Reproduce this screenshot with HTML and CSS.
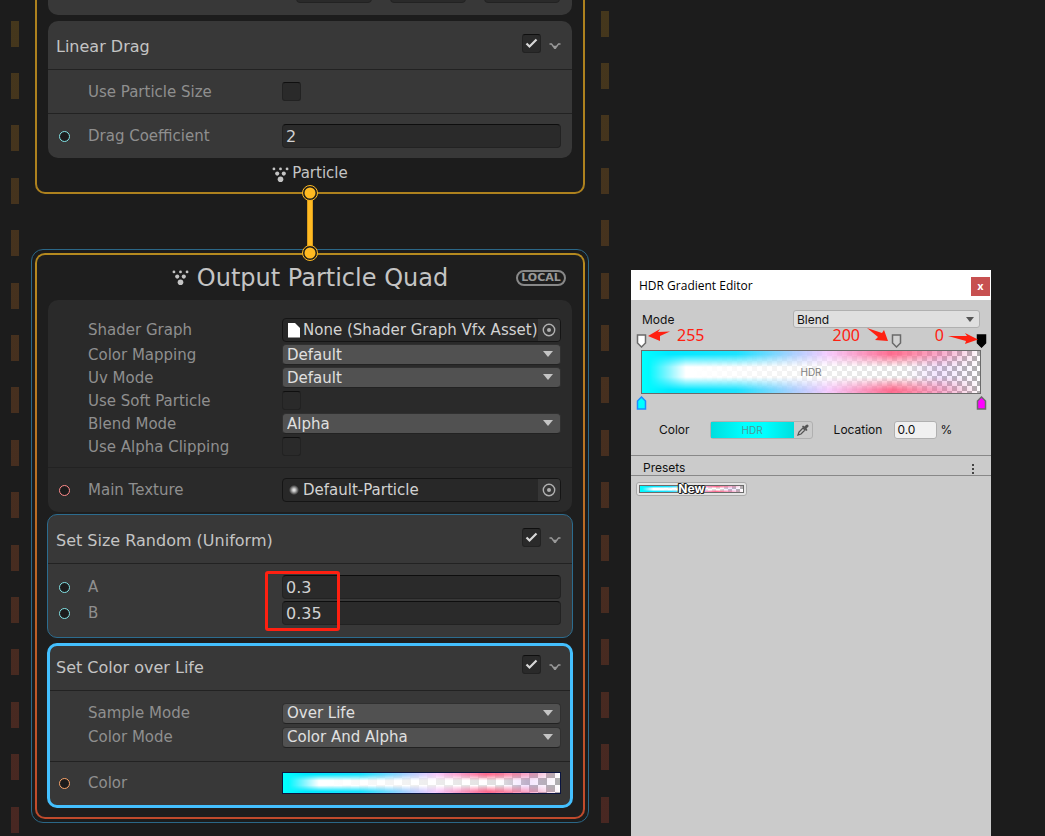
FILE: index.html
```html
<!DOCTYPE html>
<html lang="en">
	<head>
		<meta charset="utf-8" />
		<meta name="viewport" content="width=device-width" />
		<title>Visual Effect Graph</title>
		<link rel="stylesheet" href="styles.css">
	</head>
	<body>
		<svg class="defs" aria-hidden="true">
			<defs>
				<linearGradient id="system-edge" gradientUnits="userSpaceOnUse" x1="0" y1="0" x2="0" y2="836">
					<stop offset="0" stop-color="#44371c" />
					<stop offset="1" stop-color="#482722" />
				</linearGradient>
				<symbol id="particles" viewBox="0 0 18 16">
					<g fill="currentColor">
						<circle cx="2" cy="2" r="1.5" /><circle cx="9" cy="2" r="1.5" /><circle cx="16" cy="2" r="1.5" />
						<circle cx="5.500" cy="7" r="2.200" /><circle cx="12.500" cy="7" r="2.200" />
						<circle cx="9" cy="13" r="3" />
					</g>
				</symbol>
				<symbol id="chevron" viewBox="0 0 12 8">
					<path d="M0.500 2h2l2 2.500h3L9.500 2h2" fill="none" stroke="currentColor" stroke-width="1.300" />
					<path d="M3.500 4h5L6.800 7H5.200z" fill="currentColor" />
				</symbol>
				<symbol id="picker" viewBox="0 0 14 14">
					<circle cx="7" cy="7" r="5.700" fill="none" stroke="currentColor" stroke-width="1.400" />
					<circle cx="7" cy="7" r="2" fill="currentColor" />
				</symbol>
				<symbol id="key-top" viewBox="0 0 11 14">
					<path d="M1.500 1h8v8L5.500 13 1.500 9z" />
				</symbol>
				<symbol id="key-bottom" viewBox="0 0 11 14">
					<path d="M1.500 13h8V5L5.500 1 1.500 5z" />
				</symbol>
			</defs>
		</svg>

		<main class="graph">
			<svg class="system-edge" aria-hidden="true"><line x1="4" y1="21" x2="4" y2="100%" /></svg>

			<div class="contexts">
				<section class="context context-update">
					<div class="block block-cut">
						<input aria-label="X"><input aria-label="Y"><input aria-label="Z">
					</div>

					<div class="block">
						<header class="block-header">
							<h3>Linear Drag</h3>
							<input type="checkbox" aria-label="Enable Linear Drag" checked>
							<button class="fold" aria-label="Collapse"><svg><use href="#chevron" /></svg></button>
						</header>
						<div class="group single">
							<div class="row">
								<label for="particle-size">Use Particle Size</label>
								<input type="checkbox" id="particle-size">
							</div>
						</div>
						<div class="group single">
							<div class="row">
								<i class="port"></i>
								<label for="drag">Drag Coefficient</label>
								<input class="number" id="drag" value="2">
							</div>
						</div>
					</div>

					<footer class="context-footer">
						<svg class="particles"><use href="#particles" /></svg>
						<span>Particle</span>
					</footer>
				</section>

				<div class="flow">
					<svg width="18" height="78" viewBox="0 0 18 78" aria-hidden="true">
						<path d="M9 9v60" stroke="#b27e1b" stroke-width="6" />
						<path d="M9 9v60" stroke="#ffba22" stroke-width="5" />
						<g fill="#1c1c1c" stroke="#ffba22">
							<circle cx="9" cy="9" r="7.500" /><circle cx="9" cy="69" r="7.500" />
						</g>
						<g fill="#ffba22">
							<circle cx="9" cy="9" r="5.500" /><circle cx="9" cy="69" r="5.500" />
						</g>
					</svg>
				</div>

				<div class="selection">
					<section class="context context-output">
						<header class="context-header">
							<svg class="particles"><use href="#particles" /></svg>
							<h2>Output Particle Quad</h2>
							<button class="space">LOCAL</button>
						</header>

						<div class="block settings">
							<div class="group">
								<div class="row row-first">
									<span class="label">Shader Graph</span>
									<div class="object">
										<svg class="object-icon" viewBox="0 0 12 16"><path d="M0 1h7l5 5v9.500H0z" fill="#fff" /></svg>
										<span>None (Shader Graph Vfx Asset)</span>
										<button aria-label="Pick shader graph"><svg><use href="#picker" /></svg></button>
									</div>
								</div>
								<div class="row">
									<label for="mapping">Color Mapping</label>
									<div class="dropdown"><select id="mapping"><option>Default</option></select></div>
								</div>
								<div class="row">
									<label for="uv">Uv Mode</label>
									<div class="dropdown"><select id="uv"><option>Default</option></select></div>
								</div>
								<div class="row">
									<label for="soft">Use Soft Particle</label>
									<input type="checkbox" id="soft">
								</div>
								<div class="row">
									<label for="blend">Blend Mode</label>
									<div class="dropdown"><select id="blend"><option>Alpha</option></select></div>
								</div>
								<div class="row">
									<label for="clipping">Use Alpha Clipping</label>
									<input type="checkbox" id="clipping">
								</div>
							</div>
							<div class="group single">
								<div class="row">
									<i class="port port-texture"></i>
									<span class="label">Main Texture</span>
									<div class="object">
										<i class="object-icon glow"></i>
										<span>Default-Particle</span>
										<button aria-label="Pick texture"><svg><use href="#picker" /></svg></button>
									</div>
								</div>
							</div>
						</div>

						<div class="block size-block">
							<header class="block-header">
								<h3>Set Size Random (Uniform)</h3>
								<input type="checkbox" aria-label="Enable Set Size Random" checked>
								<button class="fold" aria-label="Collapse"><svg><use href="#chevron" /></svg></button>
							</header>
							<div class="group values">
								<div class="row">
									<i class="port"></i>
									<label for="size-a">A</label>
									<input class="number" id="size-a" value="0.3">
								</div>
								<div class="row">
									<i class="port"></i>
									<label for="size-b">B</label>
									<input class="number" id="size-b" value="0.35">
								</div>
								<div class="highlight"></div>
							</div>
						</div>

						<div class="block color-block">
							<header class="block-header">
								<h3>Set Color over Life</h3>
								<input type="checkbox" aria-label="Enable Set Color over Life" checked>
								<button class="fold" aria-label="Collapse"><svg><use href="#chevron" /></svg></button>
							</header>
							<div class="group modes">
								<div class="row">
									<label for="sample">Sample Mode</label>
									<div class="dropdown"><select id="sample"><option>Over Life</option></select></div>
								</div>
								<div class="row">
									<label for="color-mode">Color Mode</label>
									<div class="dropdown"><select id="color-mode"><option>Color And Alpha</option></select></div>
								</div>
							</div>
							<div class="group single">
								<div class="row">
									<i class="port port-color"></i>
									<span class="label">Color</span>
									<button class="gradient gradient-field" aria-label="Edit color gradient"></button>
								</div>
							</div>
						</div>
					</section>
				</div>
			</div>

			<svg class="system-edge" aria-hidden="true"><line x1="4" y1="11" x2="4" y2="100%" /></svg>
		</main>

		<aside class="editor">
			<header class="titlebar">
				<h1>HDR Gradient Editor</h1>
				<button class="close" aria-label="Close">x</button>
			</header>

			<div class="editor-body">
				<div class="mode">
					<label for="mode">Mode</label>
					<div class="dropdown light"><select id="mode"><option>Blend</option></select></div>
				</div>

				<div class="track">
					<div class="gradient gradient-large"><span>HDR</span></div>
					<svg class="key key-alpha at-start" fill="#fff"><use href="#key-top" /></svg>
					<svg class="key key-alpha at-mid" fill="#d2d2d2"><use href="#key-top" /></svg>
					<svg class="key key-alpha at-end black" fill="#000"><use href="#key-top" /></svg>
					<svg class="key key-color at-start active" fill="#0ff"><use href="#key-bottom" /></svg>
					<svg class="key key-color at-end" fill="#f0f"><use href="#key-bottom" /></svg>

					<div class="note note-start">
						<svg width="22" height="12" viewBox="0 0 22 12"><path d="M0 7L12 0 10 3 22 2.500 12 7 12 12z" /></svg>
						<span>255</span>
					</div>
					<div class="note note-mid">
						<span>200</span>
						<svg width="22" height="14" viewBox="0 0 22 14"><path d="M0 0L15 5 17 2 21 13 8 12 11 9z" /></svg>
					</div>
					<div class="note note-end">
						<span>0</span>
						<svg class="low" width="30" height="13" viewBox="0 0 30 13"><path d="M0 4L19 4 17 1 30 7.500 17 12 18 9z" /></svg>
					</div>
				</div>

				<div class="key-settings">
					<span>Color</span>
					<div class="color-field">
						<button class="swatch">HDR</button>
						<button class="dropper" aria-label="Pick color">
							<svg width="12" height="12" viewBox="0 0 12 12"><path d="M1 11l1-3 4-4 2 2-4 4z" fill="none" stroke="#555" stroke-width="1.300" /><path d="M5 2.500l1-1 1.500 1L9 1q1.500-1 2.300.2T11 3L9.500 4.500l1 1.500-1 1z" fill="#555" /></svg>
						</button>
					</div>
					<label for="location">Location</label>
					<input id="location" value="0.0">
					<span class="percent">%</span>
				</div>

				<div class="presets-header">
					<h2>Presets</h2>
					<button class="kebab" aria-label="Preset options"><svg width="3" height="11" viewBox="0 0 3 11"><path d="M0 0h2v2H0zM0 4h2v2H0zM0 8h2v2H0z" fill="#444" /></svg></button>
				</div>

				<button class="preset"><span class="gradient"></span><b>New</b></button>
			</div>
		</aside>
	</body>
</html>
```
FILE: styles.css
```css
* {
	box-sizing: border-box;
}
body {
	margin: 0;
	min-height: 100vh;
	display: grid;
	grid-template-columns: minmax(0, 1fr) 360px;
	padding-right: 54px;
	background: #1c1c1c;
	color: #c4c4c4;
	font-family: "DejaVu Sans", Verdana, sans-serif;
	font-size: 15px;
}
h1, h2, h3 {
	margin: 0;
	font-weight: normal;
}
button, input, select {
	font: inherit;
	color: inherit;
	margin: 0;
	padding: 0;
	border: 0;
	background: none;
}
svg {
	display: block;
	flex: none;
}
.defs {
	position: absolute;
	width: 0;
	height: 0;
}

/* graph canvas */
.graph {
	display: flex;
	gap: 12px;
	padding: 0 22px 0 11px;
	overflow: hidden;
}
.system-edge {
	width: 8px;
	height: auto;
}
.system-edge line {
	stroke: url(#system-edge);
	stroke-width: 8;
	stroke-dasharray: 26 26 26 26 26 27 26 26 26 27;
}
.contexts {
	flex: 1;
	min-width: 0;
	padding-bottom: 12px;
}
.context {
	padding: 0 11px;
	border: 2px solid transparent;
	border-radius: 10px;
}
.context-update {
	margin: -42px 4px 0;
	border-color: #ad811e;
}
.context-output {
	padding-bottom: 9px;
	background: linear-gradient(#1e1e1e, #1e1e1e) padding-box, linear-gradient(#b58a1f, #c04a2c) border-box;
}
.selection {
	padding: 3px;
	border: 1px solid #2b6787;
	border-radius: 12px;
}
.particles {
	width: 17px;
	height: 15px;
}
.context-header {
	position: relative;
	display: flex;
	align-items: center;
	justify-content: center;
	gap: 8px;
	height: 45px;
}
.context-header h2 {
	font-size: 24px;
}
.space {
	position: absolute;
	right: 6px;
	width: 50px;
	height: 16px;
	border: 2px solid #888;
	border-radius: 8px;
	color: #999;
	font-size: 11px;
	font-weight: bold;
	line-height: 12px;
}
.context-footer {
	display: flex;
	align-items: center;
	justify-content: center;
	gap: 3px;
	height: 34px;
	padding-bottom: 5px;
}
.context-footer .particles {
	margin-top: 3px;
}
.flow {
	position: relative;
	z-index: 1;
	display: flex;
	justify-content: center;
	height: 55px;
}
.flow svg {
	margin-top: -10px;
}

/* blocks */
.block {
	border-radius: 10px;
	background: #383838;
}
.block-cut {
	display: flex;
	justify-content: flex-end;
	gap: 18px;
	height: 55px;
	margin-bottom: 6px;
	padding: 19px 12px 12px;
}
.block-cut input {
	width: 76px;
	border: 1px solid #222;
	border-radius: 4px;
	background: #2a2a2a;
}
.block.settings {
	margin-bottom: 2px;
	background: #2a2a2a;
}
.size-block {
	margin: 0 -1px 5px;
	border: 1px solid #2c6c8f;
}
.color-block {
	margin: 0 -1px;
	border: 3px solid #44c0ff;
}
.block-header {
	display: flex;
	align-items: center;
	height: 48px;
	padding: 0 11px 0 8px;
}
.color-block .block-header {
	height: 44px;
	padding: 0 9px 4px 6px;
}
.block-header h3 {
	flex: 1;
	font-size: 16px;
	padding-top: 2px;
}
.block-header input[type=checkbox] {
	margin-bottom: 3px;
}
.fold {
	margin-left: 8px;
	padding-top: 2px;
	color: #999;
}
.fold svg {
	width: 12px;
	height: 8px;
}
.group {
	padding: 9px 11px 9px 0;
	border-top: 1px solid #222;
}
.single {
	padding: 10px 11px 10px 0;
}
.color-block .group {
	padding: 10px 9px 12px 0;
}
.color-block .single {
	padding: 9px 9px 10px 0;
}
.settings .group:first-child {
	padding-top: 17px;
	border-top: 0;
}
.size-block .group {
	position: relative;
	padding: 10px 11px 11px 0;
}
.row {
	display: grid;
	grid-template-columns: 40px 194px minmax(0, 1fr);
	align-items: center;
	min-height: 23px;
}
.color-block .row {
	grid-template-columns: 38px 194px minmax(0, 1fr);
	min-height: 24px;
}
.row-first, .values .row {
	min-height: 26px;
}
.row label, .row .label {
	grid-column: 2;
	color: #8f8f8f;
	font-size: 15px;
	line-height: 20px;
}
.port {
	justify-self: center;
	width: 11px;
	height: 11px;
	margin-right: 8px;
	border: 1px solid #84e4e7;
	border-radius: 50%;
	background: #1c1c1c;
}
.port-texture {
	border-color: #ff8b8b;
}
.port-color {
	margin-right: 10px;
	border-color: #fba56b;
}
input[type=checkbox] {
	appearance: none;
	width: 19px;
	height: 19px;
	border: 1px solid #222;
	border-top-color: #0f0f0f;
	border-radius: 3px;
	background: #2a2a2a center no-repeat;
}
input[type=checkbox]:checked {
	background-image: url("data:image/svg+xml,%3Csvg xmlns='http://www.w3.org/2000/svg' width='13' height='11'%3E%3Cpath d='M1.500 5.500L4.500 8.500 11.500 1.500' fill='none' stroke='%23d8d8d8' stroke-width='2.200'/%3E%3C/svg%3E");
}
.number {
	width: 100%;
	height: 24px;
	padding: 1px 3px 0;
	border: 1px solid #222;
	border-top-color: #0d0d0d;
	border-radius: 4px;
	background: #2a2a2a;
	color: #d2d2d2;
	font-size: 16px;
}
.dropdown {
	position: relative;
}
.dropdown::after {
	content: "";
	position: absolute;
	right: 8px;
	top: 7px;
	border: 5px solid transparent;
	border-top: 6px solid #c4c4c4;
	border-bottom: 0;
	pointer-events: none;
}
.dropdown select {
	display: block;
	appearance: none;
	width: 100%;
	height: 21px;
	padding: 0 4px;
	border: 1px solid #303030;
	border-bottom-color: #222;
	border-radius: 4px;
	background: #515151;
	color: #e0e0e0;
	font-size: 15px;
}
.object {
	display: flex;
	align-items: center;
	height: 24px;
	padding-left: 5px;
	border: 1px solid #151515;
	border-radius: 4px;
	background: #282828;
	color: #d2d2d2;
	white-space: nowrap;
}
.object span {
	flex: 1;
}
.object-icon {
	width: 12px;
	height: 16px;
	margin-right: 3px;
}
.glow {
	background: radial-gradient(circle, #ddd 1px, transparent 5px);
}
.object button {
	display: grid;
	place-items: center;
	width: 22px;
	height: 22px;
	border-radius: 0 3px 3px 0;
	background: #363636;
	color: #b0b0b0;
}
.object button svg {
	width: 14px;
	height: 14px;
}
.highlight {
	position: absolute;
	left: 217px;
	top: 7px;
	width: 75px;
	height: 60px;
	border: 3px solid #ff2011;
	border-radius: 3px;
}

/* gradient preview: checkerboard, white layer, hue layer */
.gradient {
	position: relative;
	display: block;
	border: 1px solid #6b6b6b;
	background: repeating-conic-gradient(#a6a6a6 0 25%, #fff 0 50%) 0 0 / 10px 10px;
}
.gradient::before, .gradient::after {
	content: "";
	position: absolute;
	inset: 0;
}
.gradient::before {
	background: linear-gradient(90deg, #fff 15%, rgba(255, 255, 255, .85) 45%, rgba(255, 255, 255, .65) 78%, rgba(225, 190, 255, .4) 88%, rgba(255, 255, 255, .1));
}
.gradient::after {
	background: linear-gradient(90deg, #0ff, #00eaff 8%, #1ce3ff 28%, rgba(160, 200, 255, .85) 45%, rgba(245, 190, 255, .75) 55%, rgba(255, 85, 125, .85) 74%, rgba(255, 110, 150, .55) 87%, rgba(220, 180, 255, 0));
	mask: linear-gradient(#000 8%, transparent 38%, transparent 62%, #000 92%), linear-gradient(90deg, #000 2%, transparent 13%);
}
.gradient-field {
	height: 22px;
	border-color: #0a1440;
	background-size: 17px 14px;
	background-position: 0 -2px;
}
.gradient-large {
	height: 44px;
}
.gradient-large span {
	position: relative;
	z-index: 1;
	display: block;
	color: #808080;
	font-size: 10px;
	line-height: 43px;
	text-align: center;
}

/* gradient editor window */
.editor {
	margin-top: 270px;
	background: #cbcbcb;
	color: #111;
	font-family: Inter, sans-serif;
	font-size: 12px;
}
.titlebar {
	display: flex;
	align-items: center;
	justify-content: space-between;
	height: 30px;
	padding: 0 1px 0 8px;
	background: #fff;
	color: #000;
}
.titlebar h1 {
	font-family: "Open Sans", sans-serif;
	font-size: 12px;
}
.close {
	align-self: flex-end;
	width: 19px;
	height: 19px;
	margin-bottom: 4px;
	background: #c75050;
	color: #fff;
	font-size: 11px;
	font-weight: bold;
	line-height: 17px;
}
.mode {
	display: flex;
	align-items: center;
	justify-content: space-between;
	padding: 10px 11px 0;
}
.dropdown.light {
	width: 187px;
}
.light select {
	height: 18px;
	padding: 0 3px;
	border-color: #b0b0b0;
	border-radius: 3px;
	background: #dfdfdf;
	color: #111;
	font-size: 12px;
}
.dropdown.light::after {
	right: 6px;
	border-width: 5px 4px 0;
	border-top-color: #555;
}
.track {
	position: relative;
	margin: 0 10px;
	padding: 22px 0 18px;
}
.key {
	position: absolute;
	width: 11px;
	height: 14px;
	margin-left: -5px;
	stroke: #6a6a6a;
	stroke-width: 1.5px;
}
.key-alpha {
	top: 6px;
}
.key-color {
	bottom: 2px;
}
.at-start {
	left: 0;
}
.at-mid {
	left: 75%;
}
.at-end {
	left: 100%;
}
.key.black {
	stroke: #000;
}
.key.active {
	stroke: #1a8cff;
}
.note {
	position: absolute;
	top: -3px;
	display: flex;
	align-items: center;
	gap: 7px;
	color: #ff2011;
	font-family: "Noto Sans", sans-serif;
	font-size: 16px;
	line-height: 20px;
}
.note svg {
	fill: #ff2011;
}
.note .low {
	margin-top: 6px;
}
.note-start {
	left: 7px;
}
.note-mid {
	right: 92px;
}
.note-end {
	right: 3px;
	gap: 4px;
}
.key-settings {
	display: flex;
	align-items: center;
	height: 35px;
	padding-left: 28px;
	margin-bottom: 8px;
}
.color-field {
	display: flex;
	height: 18px;
	margin: 0 21px 0 20px;
	border: 1px solid #b0b0b0;
	border-radius: 3px;
}
.swatch {
	width: 83px;
	background: linear-gradient(90deg, #00dede, #0ff 40%, #0ff 65%, #00dede);
	color: #4a9a9a;
	font-size: 10px;
}
.dropper {
	display: grid;
	place-items: center;
	width: 18px;
}
.key-settings input {
	width: 43px;
	height: 18px;
	margin: 0 3px 0 12px;
	padding: 0 2px;
	border: 1px solid #b0b0b0;
	border-radius: 3px;
	background: #f0f0f0;
}
.presets-header {
	display: flex;
	align-items: flex-end;
	justify-content: space-between;
	height: 21px;
	padding: 0 16px 0 12px;
	border: solid #888;
	border-width: 1px 0;
}
.presets-header h2 {
	font-size: 12px;
	line-height: 14px;
}
.preset {
	display: grid;
	align-items: center;
	width: 111px;
	height: 14px;
	margin: 6px 5px;
	padding: 0 2px;
	border: 1px solid #aaa;
	border-radius: 3px;
	background: #e4e4e4;
}
.preset .gradient, .preset b {
	grid-area: 1 / 1;
}
.preset .gradient {
	height: 8px;
	background-size: 8px 6px;
}
.preset b {
	z-index: 1;
	color: #fff;
	font-size: 12px;
	line-height: 12px;
	text-shadow: 1px 0 #222, -1px 0 #222, 0 1px #222, 0 -1px #222, 1px 1px #222, -1px -1px #222;
}
```
